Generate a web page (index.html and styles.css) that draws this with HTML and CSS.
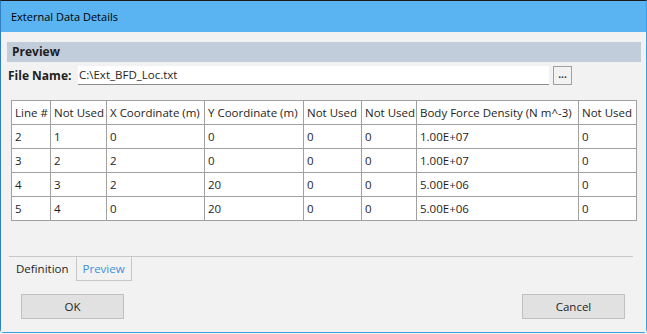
FILE: index.html
```html
<!DOCTYPE html>
<html lang="en">
<head>
    <meta charset="UTF-8">
    <meta name="viewport" content="width=device-width, initial-scale=1.0">
    <title>External Data Details</title>
    <link rel="stylesheet" href="styles.css">
</head>
<body>

    <div class="window">
        <div class="titlebar">External Data Details</div>
        <div class="content">
            <div class="section-head">Preview</div>

            <div class="file-row">
                <span class="file-label">File Name:</span>
                <div class="file-input">C:\Ext_BFD_Loc.txt</div>
                <button class="browse">...</button>
            </div>

            <table class="grid">
                <colgroup>
                    <col style="width: 39px">
                    <col style="width: 56px">
                    <col style="width: 98px">
                    <col style="width: 99px">
                    <col style="width: 58px">
                    <col style="width: 55px">
                    <col style="width: 162px">
                    <col style="width: 58px">
                </colgroup>
                <tr>
                    <td>Line #</td><td>Not Used</td><td>X Coordinate (m)</td><td>Y Coordinate (m)</td>
                    <td>Not Used</td><td>Not Used</td><td>Body Force Density (N m^-3)</td><td>Not Used</td>
                </tr>
                <tr>
                    <td>2</td><td>1</td><td>0</td><td>0</td><td>0</td><td>0</td><td>1.00E+07</td><td>0</td>
                </tr>
                <tr>
                    <td>3</td><td>2</td><td>2</td><td>0</td><td>0</td><td>0</td><td>1.00E+07</td><td>0</td>
                </tr>
                <tr>
                    <td>4</td><td>3</td><td>2</td><td>20</td><td>0</td><td>0</td><td>5.00E+06</td><td>0</td>
                </tr>
                <tr>
                    <td>5</td><td>4</td><td>0</td><td>20</td><td>0</td><td>0</td><td>5.00E+06</td><td>0</td>
                </tr>
            </table>

            <div class="tabs">
                <div class="tab active">Definition</div>
                <div class="tab">Preview</div>
            </div>

            <div class="actions">
                <button class="button">OK</button>
                <button class="button">Cancel</button>
            </div>
        </div>
    </div>

</body>
</html>
```

FILE: styles.css
```css
body {
    margin: 0;
    width: 647px;
    height: 334px;
    background-color: #f2f2f2;
    font-family: "Open Sans", "Noto Sans", sans-serif;
    font-size: 11px;
    color: #1e1e1e;
}
.window {
    width: 647px;
    height: 333px;
    box-sizing: border-box;
    border: 1px solid #3d9de3;
    border-top-color: #1a1a1a;
    border-left-color: #2f7fc0;
    border-radius: 0 0 4px 4px;
    display: flex;
    flex-direction: column;
}
.titlebar {
    height: 31px;
    background-color: #59b4f1;
    padding-left: 10px;
    line-height: 31px;
    font-size: 11px;
    color: #000;
}
.content {
    flex: 1;
    display: flex;
    flex-direction: column;
    padding: 10px 5px 0 6px;
    background-color: #f2f2f2;
}
.section-head {
    height: 20px;
    line-height: 20px;
    background-color: #c1cddb;
    padding-left: 5px;
    font-weight: bold;
    font-size: 12px;
    color: #1e1e1e;
}
.file-row {
    display: flex;
    align-items: center;
    margin-top: 4px;
    height: 19px;
}
.file-label {
    font-weight: bold;
    font-size: 12px;
    width: 70px;
    padding-left: 1px;
}
.file-input {
    width: 470px;
    height: 18px;
    line-height: 18px;
    background-color: #fff;
    border-bottom: 1px solid #8a8a8a;
    padding-left: 1px;
    font-size: 11.5px;
}
.browse {
    width: 19px;
    height: 19px;
    margin-left: 4px;
    padding: 0 0 4px;
    background-color: #f2f2f2;
    border: 1px solid #a0a0a0;
    font-family: inherit;
    font-size: 10px;
    font-weight: bold;
    line-height: 10px;
    color: #333;
    box-sizing: border-box;
}
.grid {
    margin-top: 15px;
    margin-left: 4px;
    border-collapse: collapse;
    table-layout: fixed;
    width: 625px;
    background-color: #fff;
}
.grid td {
    border: 1px solid #a0a0a0;
    height: 24px;
    padding: 0 0 0 3px;
    box-sizing: border-box;
    white-space: nowrap;
    overflow: hidden;
    font-size: 11.5px;
}
.tabs {
    display: flex;
    margin-top: 35px;
    margin-left: 2px;
    margin-right: 8px;
    border-top: 1px solid #c8c8c8;
    height: 24px;
}
.tab {
    padding: 0 7px;
    line-height: 23px;
    font-size: 11.5px;
}
.tab + .tab {
    border: 1px solid #c8c8c8;
    border-top: none;
    color: #3e90dc;
    padding: 0 6px;
}
.actions {
    display: flex;
    justify-content: space-between;
    margin-top: 13px;
    padding: 0 16px 0 14px;
}
.button {
    width: 103px;
    height: 25px;
    background-color: #e1e1e1;
    border: 1px solid #c0c0c0;
    font-family: inherit;
    font-size: 11.5px;
    color: #1e1e1e;
    padding: 0;
}
```
